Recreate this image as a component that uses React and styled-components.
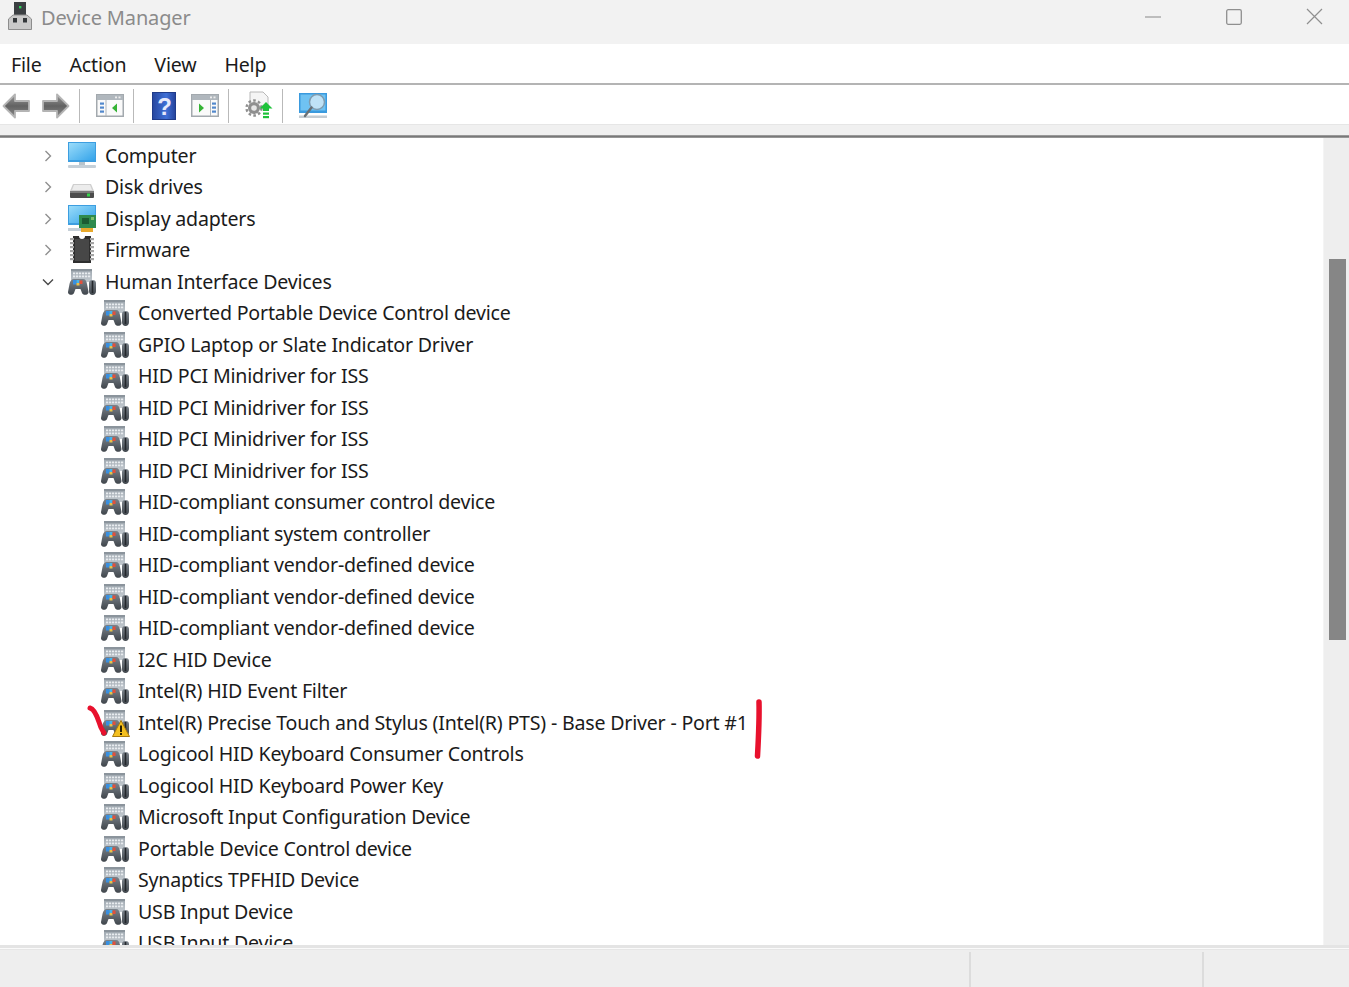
import React from 'react';
import styled, { createGlobalStyle } from 'styled-components';

const Global = createGlobalStyle`
  html, body { margin: 0; padding: 0; background: #fff; overflow: hidden; }
  body { font-family: "Noto Sans", "Open Sans", "Liberation Sans", sans-serif; }
`;

const Window = styled.div`
  position: relative;
  width: 1349px;
  height: 987px;
  display: flex;
  flex-direction: column;
  overflow: hidden;
  background: #fff;
`;

const TitleBar = styled.header`
  height: 44px;
  flex: none;
  background: #f2f2f2;
  display: flex;
  align-items: flex-start;
  padding: 2px 26px 0 8px;
  box-sizing: border-box;
`;
const TitleText = styled.span`
  margin: 2px 0 0 9px;
  font-size: 20px;
  line-height: 28px;
  letter-spacing: -0.15px;
  color: #8b8b8b;
`;
const WindowControls = styled.div`
  margin-left: auto;
  display: flex;
  gap: 64px;
`;
const ControlButton = styled.div`
  width: 17px;
  height: 29px;
  display: flex;
  align-items: center;
  justify-content: center;
`;

const MenuBar = styled.nav`
  height: 39px;
  box-sizing: content-box;
  flex: none;
  display: flex;
  align-items: center;
  gap: 28px;
  padding-left: 11px;
  background: #fff;
  border-bottom: 2px solid #b4b4b4;
`;
const MenuItem = styled.span`
  font-size: 19.6px;
  line-height: 40px;
  padding-top: 2px;
  letter-spacing: -0.2px;
  color: #1b1b1b;
`;

const ToolBar = styled.div`
  height: 39px;
  flex: none;
  box-sizing: border-box;
  padding: 2px 0 0 2px;
  display: flex;
  align-items: center;
  background: #fff;
`;
const ToolSlot = styled.div`
  width: ${p => p.$w}px;
  margin-left: ${p => p.$ml || 0}px;
  height: 30px;
  flex: none;
  display: flex;
  align-items: center;
  justify-content: center;
`;
const ToolSep = styled.div`
  width: 1px;
  height: 34px;
  flex: none;
  margin-left: ${p => p.$ml}px;
  background: #b9b9b9;
`;
const ToolStrip = styled.div`
  height: 11px;
  flex: none;
  background: #f0f0f0;
  border-top: 1px solid #e6e6e6;
  box-sizing: border-box;
`;
const HeavyRule = styled.div`
  height: 3px;
  flex: none;
  background: linear-gradient(#a9a9a9, #6f6f6f 60%, #b4b4b4);
`;

const Body = styled.main`
  flex: 1;
  min-height: 0;
  display: flex;
`;
const Tree = styled.ul`
  list-style: none;
  margin: 0;
  padding: 2px 0 0;
  flex: 1;
  min-width: 0;
  overflow: hidden;
`;
const Row = styled.li`
  height: 31.5px;
  display: flex;
  align-items: center;
  padding-left: ${p => (p.$child ? 101 : 38)}px;
  white-space: nowrap;
`;
const Expander = styled.span`
  width: 20px;
  margin-right: 10px;
  flex: none;
  display: flex;
  align-items: center;
  justify-content: center;
`;
const RowIcon = styled.span`
  position: relative;
  width: 28px;
  height: 28px;
  flex: none;
  display: block;
`;
const Label = styled.span`
  margin-left: 9px;
  font-size: 19.6px;
  line-height: 30px;
  letter-spacing: -0.2px;
  color: #1b1b1b;
`;
const ScrollTrack = styled.div`
  width: 26px;
  flex: none;
  background: #eeeeee;
  border-left: 1px solid #f4f4f4;
  box-sizing: border-box;
  padding: 121px 3px 0 5px;
`;
const ScrollThumb = styled.div`
  height: 381px;
  background: #868686;
`;
const StatusBar = styled.footer`
  height: 42px;
  flex: none;
  box-sizing: border-box;
  background: #eeeeee;
  border-top: 3px solid #e4e4e4;
  box-shadow: inset 0 1px 0 #fafafa, inset 0 2px 0 #e6e6e6;
  display: grid;
  grid-template-columns: 971px 233px 1fr;
  padding-top: 4px;
`;
const StatusCell = styled.div`
  border-right: ${p => (p.$last ? 'none' : '2px solid #dcdcdc')};
`;
const Annotation = styled.svg`
  position: absolute;
  left: 0;
  top: 0;
  pointer-events: none;
`;
const WarnBadge = styled.svg`
  position: absolute;
  right: -1px;
  bottom: 0;
`;

const Defs = () => (
  <svg width="0" height="0" style={{ position: 'absolute' }}>
    <defs>
      <linearGradient id="scr" x1="0" y1="0" x2="1" y2="1">
        <stop offset="0" stopColor="#9adcfa" />
        <stop offset="1" stopColor="#35a4ea" />
      </linearGradient>
      <linearGradient id="arrow" x1="0" y1="0" x2="0" y2="1">
        <stop offset="0" stopColor="#9a9a9a" />
        <stop offset="0.5" stopColor="#626262" />
        <stop offset="1" stopColor="#8a8a8a" />
      </linearGradient>
      <linearGradient id="help" x1="0" y1="0" x2="1" y2="0">
        <stop offset="0" stopColor="#27479f" />
        <stop offset="0.6" stopColor="#3f6fd6" />
        <stop offset="1" stopColor="#24429a" />
      </linearGradient>
      <linearGradient id="pad" x1="0" y1="0" x2="0" y2="1">
        <stop offset="0" stopColor="#7b838b" />
        <stop offset="1" stopColor="#40464c" />
      </linearGradient>
      <linearGradient id="kb" x1="0" y1="0" x2="0" y2="1">
        <stop offset="0" stopColor="#9aa3ab" />
        <stop offset="1" stopColor="#c4cbd1" />
      </linearGradient>
    </defs>
  </svg>
);

const Chevron = ({ open }) => (
  <svg width="12" height="12" viewBox="0 0 12 12" fill="none" stroke={open ? '#4a4a4a' : '#8f8f8f'} strokeWidth="1.4">
    {open ? <path d="M1 3.5 6 8.5 11 3.5" /> : <path d="M3.5 1 8.5 6 3.5 11" />}
  </svg>
);

const ComputerIcon = () => (
  <svg width="28" height="28" viewBox="0 0 28 28">
    <rect x="0" y="0" width="28" height="20" fill="#3d9ee0" />
    <rect x="1" y="1" width="26" height="17" fill="url(#scr)" />
    <rect x="11" y="20" width="6" height="3" fill="#b8c4cc" />
    <rect x="0" y="23" width="28" height="3" rx="1" fill="#c6d0d8" />
  </svg>
);
const DiskIcon = () => (
  <svg width="28" height="28" viewBox="0 0 28 28">
    <path d="M5 11h18l3 7H2z" fill="#cfcfcf" />
    <path d="M6 12h16l2 5H4z" fill="#ececec" />
    <rect x="2" y="18" width="24" height="7" rx="1" fill="#4c4c4c" />
    <rect x="2" y="18" width="24" height="2" fill="#7a7a7a" />
    <rect x="19" y="20.5" width="3" height="3" fill="#37d24a" />
  </svg>
);
const DisplayIcon = () => (
  <svg width="28" height="28" viewBox="0 0 28 28">
    <rect x="0" y="0" width="28" height="20" fill="#3d9ee0" />
    <rect x="1" y="1" width="26" height="17" fill="url(#scr)" />
    <rect x="0" y="23" width="16" height="3" fill="#c6d0d8" />
    <rect x="11" y="10" width="17" height="13" fill="#2f8a4e" />
    <rect x="14" y="13" width="7" height="6" fill="#1c5c33" />
    <rect x="23" y="12" width="3" height="3" fill="#7fbf6a" />
    <rect x="13" y="23" width="12" height="4" fill="#e8a92c" />
  </svg>
);
const FirmwareIcon = () => (
  <svg width="28" height="28" viewBox="0 0 28 28">
    <path d="M5 0h6a3 3 0 0 0 6 0h6v27H5z" fill="#2e2e2e" />
    <rect x="7" y="3" width="14" height="22" fill="#474747" />
    {[2, 6, 10, 14, 18, 22].map(y => (
      <g key={y}>
        <rect x="2" y={y} width="4" height="2.2" fill="#a5a5a5" />
        <rect x="22" y={y} width="4" height="2.2" fill="#a5a5a5" />
      </g>
    ))}
  </svg>
);
const HidIcon = () => (
  <svg width="28" height="28" viewBox="0 0 28 28">
    <rect x="3" y="1" width="21" height="13" fill="url(#kb)" />
    <rect x="3" y="1" width="21" height="2" fill="#8b949c" />
    {[4.5, 7.5].map(y =>
      [5, 8, 11, 14, 17, 20].map(x => (
        <rect key={x + '-' + y} x={x} y={y} width="2.2" height="1.8" fill="#e8ecef" />
      ))
    )}
    <path d="M0 24 1.500 16c.5-3 2-5 4.500-5h9c2.500 0 3.500 2 4 5L20.500 24c.3 3-5.500 4-6.500 1l-1.500-4h-5L6 25c-1 3-6.300 2-6-1z" fill="url(#pad)" />
    <rect x="5" y="12" width="3.500" height="4.500" fill="#3a8fe0" />
    <rect x="8.500" y="12" width="3" height="3" fill="#45b6ea" />
    <rect x="8.500" y="15" width="3" height="2.500" fill="#e8c24a" />
    <rect x="11.500" y="12.500" width="3" height="3.500" fill="#e2503c" />
    <path d="M21 15c0-2 1.200-3 3.500-3s3.500 1 3.500 3v8c0 2.500-1.500 4-3.500 4s-3.500-1.500-3.500-4z" fill="url(#pad)" />
    <rect x="23.700" y="13" width="1.600" height="12" fill="#23272b" />
  </svg>
);
const Warning = () => (
  <WarnBadge width="18" height="17" viewBox="0 0 18 17">
    <path d="M9 .5 17.500 16.500H.5z" fill="#f4c020" stroke="#a87a10" strokeWidth="1" strokeLinejoin="round" />
    <rect x="8" y="5.500" width="2" height="6.500" fill="#2a2000" />
    <rect x="8" y="13" width="2" height="2" fill="#2a2000" />
  </WarnBadge>
);
const BackIcon = ({ flip }) => (
  <svg width="28" height="26" viewBox="0 0 28 26" style={flip ? { transform: 'scaleX(-1)' } : undefined}>
    <path d="M1.500 13 13 1.500V8h14v10H13v6.500z" fill="url(#arrow)" stroke="#b4b4b4" strokeWidth="1.800" strokeLinejoin="round" />
  </svg>
);
const PaneIcon = ({ right }) => (
  <svg width="28" height="23" viewBox="0 0 28 23">
    <rect x=".75" y=".75" width="26.500" height="21.500" fill="#fafafa" stroke="#a3a9ae" strokeWidth="1.500" />
    <rect x="1" y="1" width="26" height="5" fill="#b0b7bd" />
    <rect x="19" y="2.500" width="2" height="1.800" fill="#eee" />
    <rect x="22.500" y="2.500" width="2" height="1.800" fill="#eee" />
    <rect x={right ? 19 : 9.500} y="6" width="1" height="16" fill="#b0b6bb" />
    {[8.500, 12.500, 16.500].map(y => <rect key={y} x={right ? 21 : 4} y={y} width="4" height="2.200" fill="#5288cc" />)}
    <path d={right ? 'M8 9.500v9l5-4.500z' : 'M21 9.500v9l-5-4.500z'} fill="#35b335" />
  </svg>
);
const HelpIcon = () => (
  <svg width="24" height="28" viewBox="0 0 24 28">
    <rect x=".5" y=".5" width="23" height="27" fill="url(#help)" stroke="#1f3b8a" />
    <text x="12.500" y="22.500" textAnchor="middle" fontSize="24" fontWeight="700" fill="#e6e9fb" fontFamily="Liberation Sans, sans-serif">?</text>
  </svg>
);
const UpdateIcon = () => (
  <svg width="28" height="29" viewBox="0 0 28 29">
    <path d="M5 1h13l5 5v10H5z" fill="#f5f5f5" stroke="#b8b8b8" />
    <circle cx="9" cy="17" r="6" fill="#8f8f8f" />
    <circle cx="9" cy="17" r="7.500" fill="none" stroke="#8f8f8f" strokeWidth="2.400" strokeDasharray="2.600 2.300" />
    <circle cx="9" cy="17" r="2.800" fill="#e6e6e6" />
    <path d="M21 11l6.500 6.500H24V20h-6v-2.500h-3.500z" fill="#1fc23a" />
    <rect x="18" y="21.500" width="6" height="2.200" fill="#1fc23a" />
    <rect x="18" y="25" width="6" height="2.200" fill="#1fc23a" />
  </svg>
);
const ScanIcon = () => (
  <svg width="29" height="26" viewBox="0 0 29 26">
    <rect x="0" y="0" width="28" height="20" fill="#3a9ade" />
    <rect x="1.500" y="1.500" width="25" height="16" fill="#6fc2f2" />
    <rect x="0" y="22.500" width="28" height="2.500" fill="#c4ccd2" />
    <circle cx="18" cy="9" r="7.500" fill="#bfe2f6" stroke="#7f9cb0" strokeWidth="1.500" />
    <path d="M12.500 14.500 6 23" stroke="#6a7075" strokeWidth="2.400" strokeLinecap="round" />
  </svg>
);
const DeviceManagerIcon = () => (
  <svg width="24" height="28" viewBox="0 0 24 28">
    <path d="M6 0h12v14H6z" fill="#3b3f42" />
    <rect x="11" y="4" width="2.400" height="2.400" fill="#2fd05a" />
    <path d="M.5 17 5 13h14l4.500 4v10.500H.5z" fill="#c9c9c9" stroke="#8d8d8d" />
    <rect x="5" y="16" width="4" height="4.500" fill="#33373a" />
    <rect x="15" y="16" width="4" height="4.500" fill="#33373a" />
  </svg>
);

const children = [
  'Converted Portable Device Control device',
  'GPIO Laptop or Slate Indicator Driver',
  'HID PCI Minidriver for ISS',
  'HID PCI Minidriver for ISS',
  'HID PCI Minidriver for ISS',
  'HID PCI Minidriver for ISS',
  'HID-compliant consumer control device',
  'HID-compliant system controller',
  'HID-compliant vendor-defined device',
  'HID-compliant vendor-defined device',
  'HID-compliant vendor-defined device',
  'I2C HID Device',
  'Intel(R) HID Event Filter',
  'Intel(R) Precise Touch and Stylus (Intel(R) PTS) - Base Driver - Port #1',
  'Logicool HID Keyboard Consumer Controls',
  'Logicool HID Keyboard Power Key',
  'Microsoft Input Configuration Device',
  'Portable Device Control device',
  'Synaptics TPFHID Device',
  'USB Input Device',
  'USB Input Device',
];

const top = [
  ['Computer', ComputerIcon],
  ['Disk drives', DiskIcon],
  ['Display adapters', DisplayIcon],
  ['Firmware', FirmwareIcon],
];

export default function App() {
  return (
    <Window>
      <Global />
      <Defs />
      <TitleBar>
        <DeviceManagerIcon />
        <TitleText>Device Manager</TitleText>
        <WindowControls>
          <ControlButton>
            <svg width="16" height="2" viewBox="0 0 16 2"><rect width="16" height="1.200" y=".4" fill="#9a9a9a" /></svg>
          </ControlButton>
          <ControlButton>
            <svg width="16" height="16" viewBox="0 0 16 16" fill="none"><rect x=".7" y=".7" width="14.600" height="14.600" rx="1.500" stroke="#8f8f8f" strokeWidth="1.300" /></svg>
          </ControlButton>
          <ControlButton>
            <svg width="17" height="17" viewBox="0 0 17 17" stroke="#8f8f8f" strokeWidth="1.200"><path d="M1 1 16 16M16 1 1 16" /></svg>
          </ControlButton>
        </WindowControls>
      </TitleBar>
      <MenuBar>
        <MenuItem>File</MenuItem>
        <MenuItem>Action</MenuItem>
        <MenuItem>View</MenuItem>
        <MenuItem>Help</MenuItem>
      </MenuBar>
      <ToolBar>
        <ToolSlot $w={28}><BackIcon /></ToolSlot>
        <ToolSlot $w={28} $ml={12}><BackIcon flip /></ToolSlot>
        <ToolSep $ml={9} />
        <ToolSlot $w={28} $ml={16}><PaneIcon /></ToolSlot>
        <ToolSep $ml={9} />
        <ToolSlot $w={24} $ml={18}><HelpIcon /></ToolSlot>
        <ToolSlot $w={28} $ml={15}><PaneIcon right /></ToolSlot>
        <ToolSep $ml={9} />
        <ToolSlot $w={28} $ml={16}><UpdateIcon /></ToolSlot>
        <ToolSep $ml={9} />
        <ToolSlot $w={29} $ml={16}><ScanIcon /></ToolSlot>
      </ToolBar>
      <ToolStrip />
      <HeavyRule />
      <Body>
        <Tree>
          {top.map(([name, Icon]) => (
            <Row key={name}>
              <Expander><Chevron /></Expander>
              <RowIcon><Icon /></RowIcon>
              <Label>{name}</Label>
            </Row>
          ))}
          <Row>
            <Expander><Chevron open /></Expander>
            <RowIcon><HidIcon /></RowIcon>
            <Label>Human Interface Devices</Label>
          </Row>
          {children.map((name, i) => (
            <Row $child key={i}>
              <RowIcon>
                <HidIcon />
                {name.startsWith('Intel(R) Precise') && <Warning />}
              </RowIcon>
              <Label>{name}</Label>
            </Row>
          ))}
        </Tree>
        <ScrollTrack><ScrollThumb /></ScrollTrack>
      </Body>
      <StatusBar>
        <StatusCell />
        <StatusCell />
        <StatusCell $last />
      </StatusBar>
      <Annotation width="1349" height="987" viewBox="0 0 1349 987" fill="none" stroke="#e8112d" strokeLinecap="round">
        <path d="M90 708c4 1 7 8 9 14 1 4 3 8 5 11" strokeWidth="5" />
        <path d="M759 702c.5 18-.5 36-1.500 54" strokeWidth="5.500" />
      </Annotation>
    </Window>
  );
}
